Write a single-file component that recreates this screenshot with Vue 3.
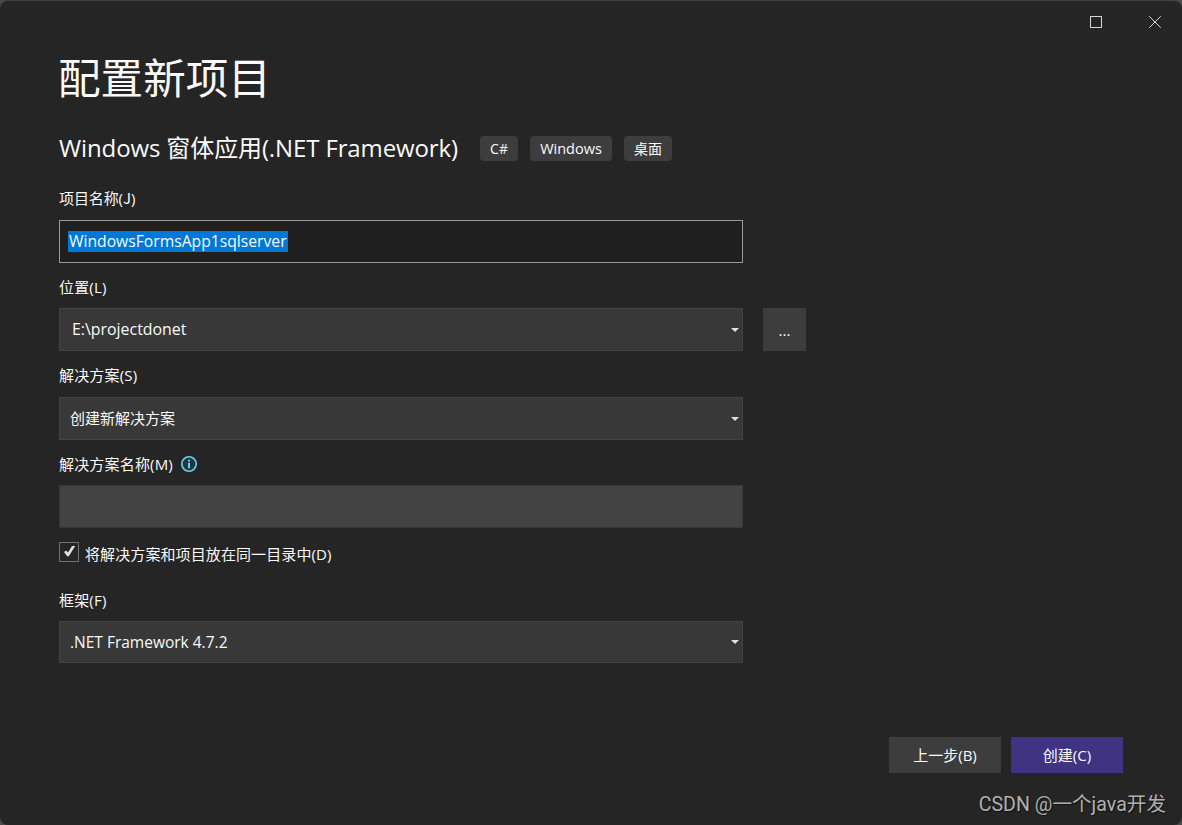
<template>
  <div class="window">
    <div class="title-bar">
      <button class="window-btn" aria-label="最大化">
        <svg width="14" height="14" viewBox="0 0 14 14" fill="none" stroke="currentColor">
          <rect x="1.5" y="1.5" width="11" height="11"></rect>
        </svg>
      </button>
      <button class="window-btn" aria-label="关闭">
        <svg width="14" height="14" viewBox="0 0 14 14" fill="none" stroke="currentColor">
          <path d="M1.2 1.2L12.8 12.8M12.8 1.2L1.2 12.8"></path>
        </svg>
      </button>
    </div>

    <main class="content">
      <h1>配置新项目</h1>

      <div class="template-row">
        <h2>Windows 窗体应用(.NET Framework)</h2>
        <span v-for="tag in tags" :key="tag.text" class="tag" :class="tag.size">{{ tag.text }}</span>
      </div>

      <div class="field name">
        <label><span>项目名称(<span class="key">J</span>)</span></label>
        <div class="text-input"><span class="selected">{{ projectName }}</span></div>
      </div>

      <div class="field location">
        <label>位置(L)</label>
        <div class="location-row">
          <div class="select">
            <span class="value">{{ location }}</span>
            <svg class="arrow" width="8" height="4" viewBox="0 0 8 4"><path d="M0 0h8L4 4z"></path></svg>
          </div>
          <button class="browse">...</button>
        </div>
      </div>

      <div class="field solution">
        <label>解决方案(S)</label>
        <div class="select">
          <span class="value">创建新解决方案</span>
          <svg class="arrow" width="8" height="4" viewBox="0 0 8 4"><path d="M0 0h8L4 4z"></path></svg>
        </div>
      </div>

      <div class="field solution-name">
        <label>
          解决方案名称(M)
          <svg class="info" width="16" height="16" viewBox="0 0 16 16">
            <circle cx="8" cy="8" r="7.2" fill="#203840" stroke="#6bd0ef" stroke-width="1.6"></circle>
            <path d="M7 3.7h2v1.8H7zM7 6.7h2v5.6H7z" fill="#6bd0ef"></path>
          </svg>
        </label>
        <div class="disabled-input"></div>
      </div>

      <div class="check-row">
        <span class="checkbox">
          <svg width="18" height="18" viewBox="0 0 18 18">
            <path d="M4 9L6.2 7.4L8 9.6L12 3H15.2L8.8 13.2H7.2z" fill="#e0e0e0"></path>
          </svg>
        </span>
        <span class="check-text">将解决方案和项目放在同一目录中(D)</span>
      </div>

      <div class="field framework">
        <label>框架(F)</label>
        <div class="select">
          <span class="value">{{ framework }}</span>
          <svg class="arrow" width="8" height="4" viewBox="0 0 8 4"><path d="M0 0h8L4 4z"></path></svg>
        </div>
      </div>
    </main>

    <div class="footer">
      <button class="btn">上一步(B)</button>
      <button class="btn primary">创建(C)</button>
    </div>

    <div class="watermark">CSDN @一个java开发</div>
  </div>
</template>

<script setup>
const projectName = 'WindowsFormsApp1sqlserver'
const location = 'E:\\projectdonet'
const framework = '.NET Framework 4.7.2'

const tags = [
  { text: 'C#', size: 'small' },
  { text: 'Windows', size: 'wide' },
  { text: '桌面', size: 'medium' }
]
</script>

<style>
body {
  margin: 0;
  background: #4a4a4a;
}
</style>

<style scoped>
.window {
  position: relative;
  box-sizing: border-box;
  width: 1182px;
  height: 825px;
  overflow: hidden;
  display: flex;
  flex-direction: column;
  border-top: 1px solid #404040;
  border-radius: 8px;
  background: #252525;
  color: #fafafa;
  font-family: "Open Sans", "Noto Sans CJK SC", sans-serif;
  font-size: 15px;
}

button {
  border: 0;
  padding: 0;
  color: inherit;
  font: inherit;
}

svg {
  display: block;
  flex: none;
}

.title-bar {
  height: 42px;
  display: flex;
  justify-content: flex-end;
  align-items: center;
  gap: 45px;
  padding-right: 20px;
}

.window-btn {
  background: none;
  color: #d6d6d6;
}

.content {
  padding-left: 59px;
}

h1 {
  margin: 0 0 0 -1px;
  height: 70px;
  line-height: 69px;
  font-size: 42.6px;
  font-weight: 400;
}

.template-row {
  height: 50px;
  margin-top: 10px;
  display: flex;
  align-items: center;
}

h2 {
  margin: 0;
  padding-bottom: 4px;
  width: 421px;
  white-space: nowrap;
  font-size: 24px;
  font-weight: 400;
  letter-spacing: -0.12px;
}

.tag {
  height: 25px;
  line-height: 25px;
  margin-right: 12px;
  border-radius: 4px;
  background: #3d3d3d;
  font-size: 14px;
  text-align: center;
}

.tag.small {
  width: 38px;
}

.tag.wide {
  width: 82px;
  font-size: 14.5px;
}

.tag.medium {
  width: 48px;
}

.field {
  width: 684px;
  margin-top: 12px;
}

.name {
  margin-top: 13px;
}

label {
  height: 24px;
  margin-bottom: 9px;
  display: flex;
  align-items: center;
  gap: 8px;
  line-height: 24px;
  letter-spacing: 0.18px;
}

.name label {
  letter-spacing: -0.1px;
}

/* the J of this face stays on the baseline */
.key {
  font-family: "Noto Sans CJK SC", sans-serif;
}

.name label,
.solution label {
  margin-bottom: 10px;
}

.text-input,
.select,
.disabled-input {
  box-sizing: border-box;
  width: 684px;
  height: 43px;
  display: flex;
  align-items: center;
  border: 1px solid #434343;
  background: #383838;
}

.text-input {
  padding-left: 8px;
  border-color: #999;
  background: #1f1f1f;
}

.selected {
  height: 21px;
  line-height: 21px;
  padding: 0 1px;
  background: #0078d7;
  font-size: 15.7px;
}

.select {
  justify-content: space-between;
  padding: 0 3px 0 10px;
}

.location .select {
  padding-left: 12px;
}

.location .value {
  padding-bottom: 1px;
  font-size: 15.9px;
}

.solution .value {
  padding-bottom: 3px;
}

.framework .value {
  font-size: 15.5px;
}

.arrow {
  fill: #e0e0e0;
}

.location-row {
  display: flex;
  gap: 20px;
}

.location-row .select {
  flex: none;
}

.browse {
  flex: none;
  width: 43px;
  height: 43px;
  background: #3d3d3d;
}

.disabled-input {
  border-color: #383838;
  background: #434343;
}

.check-row {
  height: 24px;
  margin-top: 14px;
  display: flex;
  gap: 6px;
}

.checkbox {
  width: 18px;
  height: 18px;
  border: 1px solid #717171;
}

.check-text {
  line-height: 24px;
  letter-spacing: 0.1px;
}

.framework {
  margin-top: 22px;
}

.framework .select {
  height: 42px;
}

.footer {
  margin-top: 74px;
  padding-right: 59px;
  display: flex;
  justify-content: flex-end;
  gap: 10px;
}

.btn {
  width: 112px;
  height: 36px;
  padding-bottom: 1px;
  background: #3d3d3d;
}

.btn.primary {
  background: #403382;
}

.watermark {
  position: absolute;
  right: 16px;
  bottom: 5px;
  line-height: 30px;
  color: #b0b0b0;
  font-family: Roboto, "Noto Sans CJK SC", sans-serif;
  font-size: 19.6px;
  text-shadow: 1px 1px 1px #111;
}
</style>
